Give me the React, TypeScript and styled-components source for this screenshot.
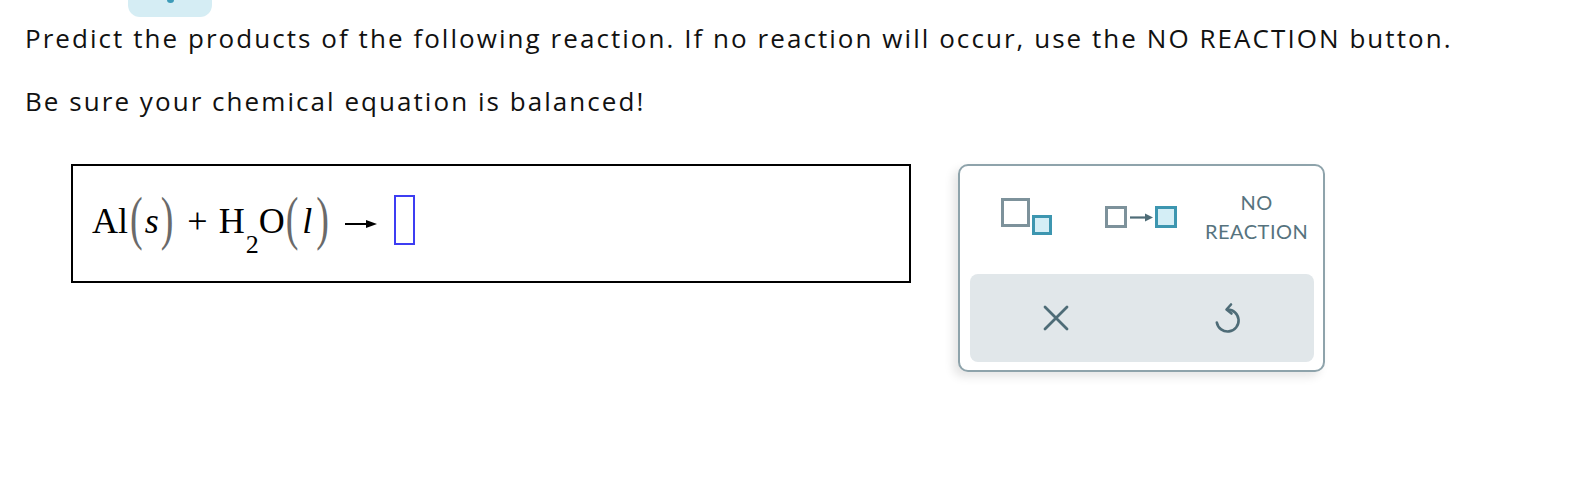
import React from "react";
import styled, { createGlobalStyle } from "styled-components";

const GlobalStyle = createGlobalStyle`
  html, body { margin: 0; padding: 0; background: #ffffff; }
  body { font-family: "Open Sans", sans-serif; color: #111; }
`;

const Page = styled.div`
  width: 1580px;
  height: 488px;
  overflow: hidden;
`;

const Tab = styled.div`
  position: relative;
  margin-left: 128px;
  width: 84px;
  height: 17px;
  background: #d5edf4;
  border-radius: 0 0 12px 12px;
`;

const TabMark = styled.div`
  position: absolute;
  left: 39px;
  top: -3px;
  width: 7px;
  height: 6px;
  border-radius: 50%;
  background: #3d9bb8;
`;

const Prompt = styled.p<{ $top: number }>`
  margin: ${(p) => p.$top}px 0 0 25px;
  font-family: "Open Sans", sans-serif;
  font-size: 26px;
  letter-spacing: 2.05px;
  line-height: 30px;
  white-space: nowrap;
`;

const Workspace = styled.div`
  display: flex;
  align-items: flex-start;
  gap: 47px;
  margin-top: 48px;
  padding-left: 71px;
`;

const AnswerBox = styled.div`
  box-sizing: border-box;
  width: 840px;
  height: 119px;
  border: 2px solid #000;
  padding: 29px 0 0 19px;
`;

const Equation = styled.div`
  font-family: "Liberation Serif", "Times New Roman", serif;
  font-size: 36px;
  line-height: 40px;
  white-space: nowrap;
  color: #000;
`;

const Paren = styled.span<{ $l?: number; $r?: number }>`
  display: inline-block;
  color: #6a6a6a;
  font-size: 38px;
  transform: scaleY(1.55);
  transform-origin: 50% 62%;
  margin-left: ${(p) => p.$l ?? 0}px;
  margin-right: ${(p) => p.$r ?? 0}px;
`;

const Italic = styled.span<{ $m: number }>`
  font-style: italic;
  margin: 0 ${(p) => p.$m}px;
`;

const Op = styled.span<{ $l: number; $r: number }>`
  margin-left: ${(p) => p.$l}px;
  margin-right: ${(p) => p.$r}px;
`;

const Sub = styled.span`
  font-size: 26px;
  vertical-align: -20px;
  line-height: 0;
  margin-left: 1px;
`;

const ArrowIcon = styled.svg`
  vertical-align: 4px;
  margin-left: 16px;
`;

const Slot = styled.span`
  display: inline-block;
  box-sizing: border-box;
  width: 21px;
  height: 50px;
  border: 2px solid #3d3df2;
  vertical-align: -12px;
  margin-left: 17px;
`;

const Palette = styled.div`
  box-sizing: border-box;
  width: 367px;
  height: 208px;
  border: 2px solid #8ea3ab;
  border-radius: 10px;
  background: #fff;
  box-shadow: -5px 5px 10px rgba(0, 0, 0, 0.1);
  padding: 0 9px 8px 10px;
  display: flex;
  flex-direction: column;
  gap: 8px;
`;

const PaletteTop = styled.div`
  display: grid;
  grid-template-columns: repeat(3, 1fr);
  height: 100px;
`;

const ToolButton = styled.button`
  display: flex;
  align-items: center;
  justify-content: center;
  background: transparent;
  border: none;
  padding: 0;
  cursor: pointer;
  font-family: "Lato", "Open Sans", sans-serif;
  font-size: 20px;
  letter-spacing: 0.5px;
  line-height: 29px;
  color: #56737e;
  text-align: center;
  padding-top: 2px;
`;

const PaletteBottom = styled.div`
  display: grid;
  grid-template-columns: repeat(2, 1fr);
  height: 88px;
  background: #e1e7ea;
  border-radius: 8px;
`;

const ActionButton = styled.button`
  display: flex;
  align-items: center;
  justify-content: center;
  background: transparent;
  border: none;
  padding: 0;
  cursor: pointer;
`;

const GREY = "#7d929b";
const TEAL = "#3d96b0";
const TEAL_FILL = "#d4eef6";
const INK = "#4e6c77";

export default function App() {
  return (
    <>
      <GlobalStyle />
      <Page>
        <Tab>
          <TabMark />
        </Tab>
        <Prompt $top={6}>
          Predict the products of the following reaction. If no reaction will occur, use the NO REACTION button.
        </Prompt>
        <Prompt $top={33}>Be sure your chemical equation is balanced!</Prompt>
        <Workspace>
          <AnswerBox>
            <Equation>
              Al
              <Paren $l={2}>(</Paren>
              <Italic $m={2}>s</Italic>
              <Paren>)</Paren>
              <Op $l={14} $r={11}>+</Op>
              H<Sub>2</Sub>O
              <Paren $l={1}>(</Paren>
              <Italic $m={4}>l</Italic>
              <Paren>)</Paren>
              <ArrowIcon width="32" height="10" viewBox="0 0 32 10">
                <line x1="0" y1="5" x2="24" y2="5" stroke="#000" strokeWidth="2" />
                <polygon points="21,1 32,5 21,9" fill="#000" />
              </ArrowIcon>
              <Slot />
            </Equation>
          </AnswerBox>
          <Palette>
            <PaletteTop>
              <ToolButton aria-label="subscript">
                <svg width="52" height="38" viewBox="0 0 52 38">
                  <rect x="1.5" y="1.5" width="26" height="26" fill="none" stroke={GREY} strokeWidth="3" />
                  <rect x="32.5" y="18.5" width="17" height="17" fill={TEAL_FILL} stroke={TEAL} strokeWidth="3" />
                </svg>
              </ToolButton>
              <ToolButton aria-label="reaction arrow">
                <svg width="73" height="23" viewBox="0 0 73 23">
                  <rect x="1.5" y="1.5" width="19" height="19" fill="none" stroke={GREY} strokeWidth="3" />
                  <line x1="25" y1="11.5" x2="42" y2="11.5" stroke={INK} strokeWidth="2.2" />
                  <polygon points="40,7.5 48,11.5 40,15.5" fill={INK} />
                  <rect x="51.5" y="1.5" width="19" height="19" fill={TEAL_FILL} stroke={TEAL} strokeWidth="3" />
                </svg>
              </ToolButton>
              <ToolButton>
                NO
                <br />
                REACTION
              </ToolButton>
            </PaletteTop>
            <PaletteBottom>
              <ActionButton aria-label="clear">
                <svg width="26" height="26" viewBox="0 0 26 26">
                  <path d="M2 2 L24 24 M24 2 L2 24" stroke={INK} strokeWidth="2.8" strokeLinecap="round" />
                </svg>
              </ActionButton>
              <ActionButton aria-label="undo">
                <svg width="28" height="34" viewBox="0 0 28 34" fill="none">
                  <path
                    d="M13.5 8.5 A11 11 0 1 1 2.8 21.5"
                    stroke={INK}
                    strokeWidth="2.6"
                    strokeLinecap="round"
                  />
                  <path
                    d="M17 3.5 L12.5 8.5 L17.5 12.5"
                    stroke={INK}
                    strokeWidth="2.6"
                    strokeLinecap="round"
                    strokeLinejoin="round"
                  />
                </svg>
              </ActionButton>
            </PaletteBottom>
          </Palette>
        </Workspace>
      </Page>
    </>
  );
}
